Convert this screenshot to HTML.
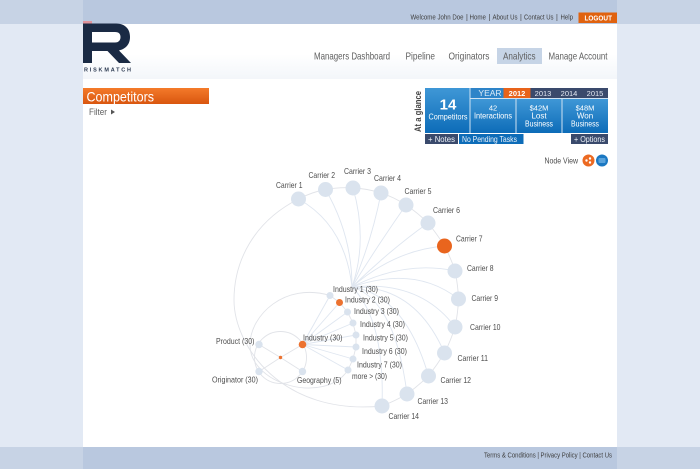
<!DOCTYPE html>
<html><head><meta charset="utf-8"><title>Competitors</title>
<style>
html,body{margin:0;padding:0;background:#e2e9f4;width:700px;height:469px;overflow:hidden}
svg{display:block;font-family:"Liberation Sans",sans-serif}
.n{fill:#dae3ee}
.c{fill:#4d4d4d;font-size:8.300px}
.l{fill:none;stroke:#dfe6f0;stroke-width:.9}
.g{fill:none;stroke:#e1e3e8;stroke-width:.9}
</style></head><body>
<svg width="700" height="469" viewBox="0 0 700 469" xmlns="http://www.w3.org/2000/svg">
<defs>
<linearGradient id="h" x1="0" y1="0" x2="0" y2="1"><stop offset="0.55" stop-color="#fff"/><stop offset="1" stop-color="#f3f6fa"/></linearGradient>
<linearGradient id="o" x1="0" y1="0" x2="0" y2="1"><stop offset="0" stop-color="#f47a2a"/><stop offset="1" stop-color="#d9560f"/></linearGradient>
<linearGradient id="b" x1="0" y1="0" x2="0" y2="1"><stop offset="0" stop-color="#3f97d6"/><stop offset="1" stop-color="#0d6cb8"/></linearGradient>
</defs>
<rect width="700" height="469" fill="#e2e9f4"/>
<rect width="700" height="24" fill="#c7d3e5"/>
<rect y="447" width="700" height="22" fill="#c7d3e5"/>
<rect x="83" width="534" height="469" fill="#fff"/>
<rect x="83" width="534" height="24" fill="#b9c8df"/>
<rect x="83" y="447" width="534" height="22" fill="#b9c8df"/>
<rect x="83" y="24" width="534" height="55" fill="url(#h)"/>

<rect x="83" y="21" width="9" height="3" fill="#e0949c"/>
<path fill-rule="evenodd" d="M83 23.500H116C125 23.500 130 29 130 37C130 44.500 125.500 49 119 50.500L131 63H119L107.500 51H92V63H83ZM92 32V42.500H115C119 42.500 120.500 40 120.500 37C120.500 34 119 32 115 32Z" fill="#1a2a44"/>
<text x="84" y="71.500" font-size="5.500" font-weight="bold" fill="#2a3850" textLength="47" lengthAdjust="spacing">RISKMATCH</text>

<g font-size="7.200" fill="#3f3f3f">
<text x="410.500" y="19.500" textLength="53" lengthAdjust="spacingAndGlyphs">Welcome John Doe</text>
<text x="466" y="19.500">|</text>
<text x="469.500" y="19.500" textLength="16.500" lengthAdjust="spacingAndGlyphs">Home</text>
<text x="488.500" y="19.500">|</text>
<text x="492.500" y="19.500" textLength="25" lengthAdjust="spacingAndGlyphs">About Us</text>
<text x="520" y="19.500">|</text>
<text x="524" y="19.500" textLength="29.500" lengthAdjust="spacingAndGlyphs">Contact Us</text>
<text x="556" y="19.500">|</text>
<text x="560.500" y="19.500" textLength="12.500" lengthAdjust="spacingAndGlyphs">Help</text>
</g>
<rect x="578.500" y="12.500" width="38.500" height="10.500" fill="#e0620f"/>
<text x="584.500" y="20.500" font-size="7.500" font-weight="bold" fill="#fff" textLength="27.500" lengthAdjust="spacingAndGlyphs">LOGOUT</text>

<rect x="497" y="48" width="45" height="16" fill="#c6d4e6"/>
<g font-size="10.500" fill="#5f5f5f">
<text x="314" y="59.500" textLength="76" lengthAdjust="spacingAndGlyphs">Managers Dashboard</text>
<text x="405.500" y="59.500" textLength="29.500" lengthAdjust="spacingAndGlyphs">Pipeline</text>
<text x="448.500" y="59.500" textLength="41" lengthAdjust="spacingAndGlyphs">Originators</text>
<text x="503" y="59.500" textLength="32.500" lengthAdjust="spacingAndGlyphs">Analytics</text>
<text x="548.500" y="59.500" textLength="59" lengthAdjust="spacingAndGlyphs">Manage Account</text>
</g>

<rect x="83" y="88" width="126" height="16" fill="url(#o)"/>
<text x="86.500" y="101.500" font-size="14" fill="#fff" textLength="67.500" lengthAdjust="spacingAndGlyphs">Competitors</text>
<text x="89" y="115" font-size="9.500" fill="#5f5f5f" textLength="18" lengthAdjust="spacingAndGlyphs">Filter</text>
<path d="M111 109.500L115 112L111 114.500Z" fill="#555"/>

<text transform="translate(421,132) rotate(-90)" font-size="9" font-weight="bold" fill="#444" textLength="41" lengthAdjust="spacingAndGlyphs">At a glance</text>
<rect x="425" y="88" width="183" height="45" fill="#cfe2f2"/>
<rect x="425" y="88" width="44.500" height="45" fill="url(#b)"/>
<rect x="470.500" y="88" width="33" height="10" fill="#2e84c8"/>
<rect x="503.500" y="88" width="27" height="10" fill="#e8631a"/>
<rect x="530.500" y="88" width="77.500" height="10" fill="#3a4a6c"/>
<rect x="470.500" y="99" width="45" height="34" fill="url(#b)"/>
<rect x="516.500" y="99" width="45" height="34" fill="url(#b)"/>
<rect x="562.500" y="99" width="45.500" height="34" fill="url(#b)"/>
<g fill="#fff" text-anchor="middle">
<text x="448" y="109.500" font-size="15" font-weight="bold">14</text>
<text x="448" y="119.500" font-size="8" textLength="39" lengthAdjust="spacingAndGlyphs">Competitors</text>
<text x="493" y="110.500" font-size="7.500">42</text>
<text x="493" y="118.500" font-size="8" textLength="38" lengthAdjust="spacingAndGlyphs">Interactions</text>
<text x="539" y="110.500" font-size="7.500">$42M</text>
<text x="539" y="118.500" font-size="8">Lost</text>
<text x="539" y="126.500" font-size="8" textLength="28" lengthAdjust="spacingAndGlyphs">Business</text>
<text x="585" y="110.500" font-size="7.500">$48M</text>
<text x="585" y="118.500" font-size="8">Won</text>
<text x="585" y="126.500" font-size="8" textLength="28" lengthAdjust="spacingAndGlyphs">Business</text>
<text x="490" y="96" font-size="8.500" fill="#dcebf7">YEAR</text>
<text x="517" y="96" font-size="7.500" font-weight="bold">2012</text>
<text x="543" y="96" font-size="7.500" fill="#e4e9f2">2013</text>
<text x="569" y="96" font-size="7.500" fill="#e4e9f2">2014</text>
<text x="595" y="96" font-size="7.500" fill="#e4e9f2">2015</text>
</g>
<rect x="425" y="134" width="33" height="10" fill="#3a4a6c"/>
<rect x="459" y="134" width="64.500" height="10" fill="#0d6cb8"/>
<rect x="571" y="134" width="37" height="10" fill="#3a4a6c"/>
<g fill="#eef3f9" font-size="8.500">
<text x="428" y="142" textLength="27" lengthAdjust="spacingAndGlyphs">+ Notes</text>
<text x="462" y="142" font-size="8" textLength="55" lengthAdjust="spacingAndGlyphs">No Pending Tasks</text>
<text x="574" y="142" textLength="31" lengthAdjust="spacingAndGlyphs">+ Options</text>
</g>

<text x="544.500" y="163.500" font-size="8" fill="#4d4d4d" textLength="33.500" lengthAdjust="spacingAndGlyphs">Node View</text>
<circle cx="588.500" cy="160.500" r="6" fill="#ec6a22"/>
<circle cx="586.500" cy="160.500" r="1.200" fill="#fff"/><circle cx="590" cy="158.500" r="1.200" fill="#fff"/><circle cx="590" cy="162.500" r="1.200" fill="#fff"/>
<circle cx="602" cy="160.500" r="6" fill="#1b78c2"/>
<rect x="598.500" y="158" width="7" height="5" rx="1" fill="#5aa3dc"/>

<!-- graph lines -->
<path class="g" d="M298.500 199C253 222 234 262 234 300C234 346 282 416 382 406"/>
<path class="g" d="M298.500 199Q312 192 325.500 189.500Q339 187 353 188Q367 188.500 381 193Q394 197 406 205Q418 213 428 223Q437 234 444.500 246Q451 258 455 271Q458 285 458.500 299Q458 313 455 327Q451 340 444.500 353Q437 365 428.500 376Q418 386 407 394Q395 401 382 406"/>
<path class="g" d="M330 295.500C285 282 250 315 250 345C250 385 325 405 348 370"/>
<path class="g" d="M330 295.500L339.500 302.500L347.500 312L353 323L356 335L356 347L353 359L348 370"/>
<circle class="g" cx="280.500" cy="357.500" r="26"/>
<path class="g" d="M280.500 357.500L259 344.500M280.500 357.500L259 371.500M280.500 357.500L302.500 344.500M280.500 357.500L302.500 371.500"/>
<path class="l" d="M302.500 344.500L330 295.500M302.500 344.500L339.500 302.500M302.500 344.500L347.500 312M302.500 344.500L353 323M302.500 344.500L356 335M302.500 344.500L356 347M302.500 344.500L353 359M302.500 344.500L348 370"/>
<g class="l">
<path d="M298.500 199Q345 225 352 287"/>
<path d="M325.500 189.500Q352 235 352 287"/>
<path d="M353 188Q368 240 352 287"/>
<path d="M381 193Q372 240 352 287"/>
<path d="M406 205Q378 245 352 287"/>
<path d="M428 223Q390 250 352 287"/>
<path d="M444.500 246Q395 250 352 287"/>
<path d="M455 271Q405 260 352 287"/>
<path d="M458.500 299Q415 265 352 287"/>
<path d="M455 327Q420 280 352 287"/>
<path d="M444.500 353Q415 285 352 287"/>
<path d="M428.500 376Q405 295 352 287"/>
<path d="M407 394Q395 300 352 287"/>
<path d="M382 406Q385 320 352 287"/>
</g>

<!-- nodes -->
<g class="n">
<circle cx="298.500" cy="199" r="7.500"/><circle cx="325.500" cy="189.500" r="7.500"/><circle cx="353" cy="188" r="7.500"/><circle cx="381" cy="193" r="7.500"/><circle cx="406" cy="205" r="7.500"/><circle cx="428" cy="223" r="7.500"/>
<circle cx="455" cy="271" r="7.500"/><circle cx="458.500" cy="299" r="7.500"/><circle cx="455" cy="327" r="7.500"/><circle cx="444.500" cy="353" r="7.500"/><circle cx="428.500" cy="376" r="7.500"/><circle cx="407" cy="394" r="7.500"/><circle cx="382" cy="406" r="7.500"/>
<circle cx="330" cy="295.500" r="3.500"/><circle cx="347.500" cy="312" r="3.500"/><circle cx="353" cy="323" r="3.500"/><circle cx="356" cy="335" r="3.500"/><circle cx="356" cy="347" r="3.500"/><circle cx="353" cy="359" r="3.500"/><circle cx="348" cy="370" r="3.500"/>
<circle cx="259" cy="344.500" r="3.700"/><circle cx="259" cy="371.500" r="3.700"/><circle cx="302.500" cy="371.500" r="3.700"/>
</g>
<circle cx="444.500" cy="246" r="7.500" fill="#e9651e"/>
<circle cx="339.500" cy="302.500" r="3.500" fill="#ec7230"/>
<circle cx="302.500" cy="344.500" r="3.800" fill="#ec7230"/>
<circle cx="280.500" cy="357.500" r="1.700" fill="#ec7230"/>

<!-- labels -->
<g class="c">
<text x="276" y="188" textLength="26.500" lengthAdjust="spacingAndGlyphs">Carrier 1</text>
<text x="308.500" y="178" textLength="26.500" lengthAdjust="spacingAndGlyphs">Carrier 2</text>
<text x="344" y="174" textLength="27" lengthAdjust="spacingAndGlyphs">Carrier 3</text>
<text x="374" y="181" textLength="27" lengthAdjust="spacingAndGlyphs">Carrier 4</text>
<text x="404.500" y="194" textLength="27" lengthAdjust="spacingAndGlyphs">Carrier 5</text>
<text x="433" y="213" textLength="27" lengthAdjust="spacingAndGlyphs">Carrier 6</text>
<text x="456" y="241.500" textLength="26.500" lengthAdjust="spacingAndGlyphs">Carrier 7</text>
<text x="467" y="271" textLength="26.500" lengthAdjust="spacingAndGlyphs">Carrier 8</text>
<text x="471.500" y="301" textLength="26.500" lengthAdjust="spacingAndGlyphs">Carrier 9</text>
<text x="470" y="330" textLength="30.500" lengthAdjust="spacingAndGlyphs">Carrier 10</text>
<text x="457.500" y="361" textLength="30.500" lengthAdjust="spacingAndGlyphs">Carrier 11</text>
<text x="440.500" y="383" textLength="30.500" lengthAdjust="spacingAndGlyphs">Carrier 12</text>
<text x="417.500" y="404" textLength="30.500" lengthAdjust="spacingAndGlyphs">Carrier 13</text>
<text x="388.500" y="419" textLength="30.500" lengthAdjust="spacingAndGlyphs">Carrier 14</text>
<text x="333" y="292" textLength="45" lengthAdjust="spacingAndGlyphs">Industry 1 (30)</text>
<text x="345" y="302.500" textLength="45" lengthAdjust="spacingAndGlyphs">Industry 2 (30)</text>
<text x="354" y="314" textLength="45" lengthAdjust="spacingAndGlyphs">Industry 3 (30)</text>
<text x="360" y="327" textLength="45" lengthAdjust="spacingAndGlyphs">Industry 4 (30)</text>
<text x="363" y="340.500" textLength="45" lengthAdjust="spacingAndGlyphs">Industry 5 (30)</text>
<text x="362" y="354" textLength="45" lengthAdjust="spacingAndGlyphs">Industry 6 (30)</text>
<text x="357" y="367.500" textLength="45" lengthAdjust="spacingAndGlyphs">Industry 7 (30)</text>
<text x="352" y="379" textLength="35" lengthAdjust="spacingAndGlyphs">more &gt; (30)</text>
<text x="303" y="340.500" textLength="39.500" lengthAdjust="spacingAndGlyphs">Industry (30)</text>
<text x="216" y="344" textLength="38.500" lengthAdjust="spacingAndGlyphs">Product (30)</text>
<text x="212" y="382.500" textLength="46" lengthAdjust="spacingAndGlyphs">Originator (30)</text>
<text x="297" y="383" textLength="44.500" lengthAdjust="spacingAndGlyphs">Geography (5)</text>
</g>

<text x="484" y="457.500" font-size="7.200" fill="#3f3f3f" textLength="128" lengthAdjust="spacingAndGlyphs">Terms &amp; Conditions | Privacy Policy | Contact Us</text>
</svg>
</body></html>
